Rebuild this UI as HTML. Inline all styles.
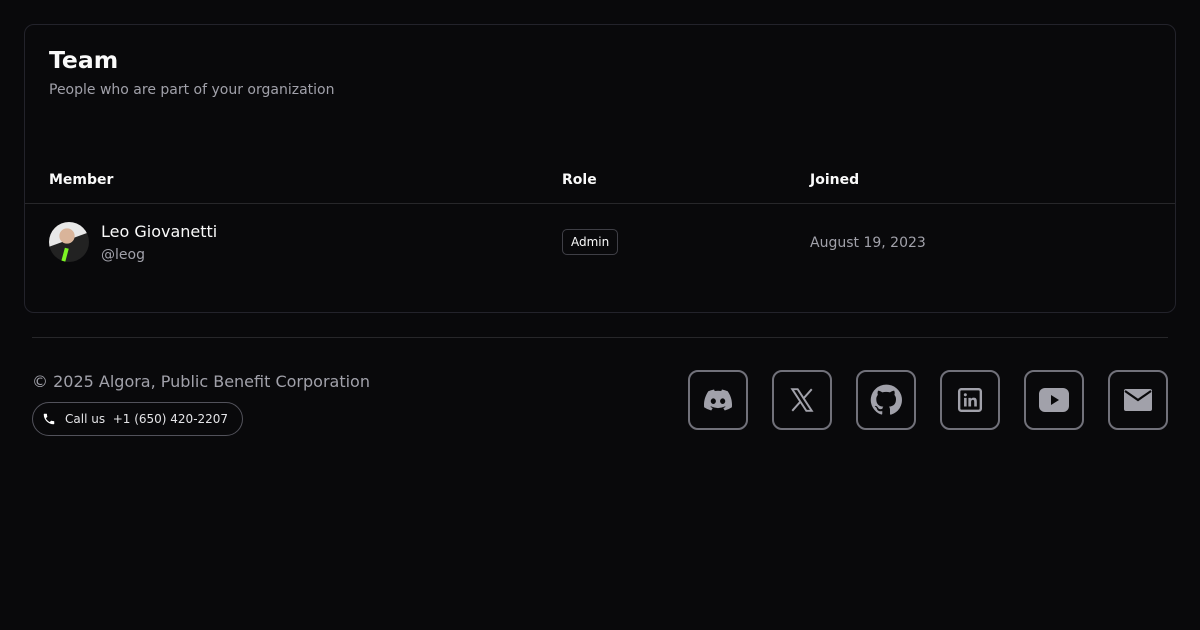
<!DOCTYPE html>
<html><head><style>
*{margin:0;padding:0;box-sizing:border-box}
body{width:1200px;height:630px;background:#09090b;font-family:"DejaVu Sans","Liberation Sans",sans-serif;color:#fafafa;position:relative;overflow:hidden}
.card{position:absolute;left:24px;top:24px;width:1152px;height:289px;border:1px solid #23232b;border-radius:10px}
.t{position:absolute;left:24px;top:21px;font-size:23.5px;font-weight:bold}
.s{position:absolute;left:24px;top:57px;font-size:14px;color:#a1a1aa}
.h{position:absolute;top:147px;font-size:14px;font-weight:bold}
.line{position:absolute;left:0;right:0;top:178px;border-top:1px solid #27272a}
.av{position:absolute;left:24px;top:197px;width:40px;height:40px;border-radius:50%;background:radial-gradient(circle at 45% 35%,#d9b49a 0 22%,transparent 23%),linear-gradient(160deg,#e8e8e8 0 45%,#222 46%);overflow:hidden}
.av:after{content:"";position:absolute;left:14px;top:26px;width:4px;height:14px;background:#7cf523;transform:rotate(15deg)}
.nm{position:absolute;left:76px;top:197px;font-size:16px}
.us{position:absolute;left:76px;top:222px;font-size:14px;color:#a1a1aa}
.badge{position:absolute;left:537px;top:204px;height:26px;padding:0 8px;border:1px solid #3f3f46;border-radius:5px;font-size:12px;line-height:24px}
.dt{position:absolute;left:785px;top:210px;font-size:14px;color:#a1a1aa}
.fl{position:absolute;left:32px;top:337px;width:1136px;border-top:1px solid #27272a}
.cp{position:absolute;left:32px;top:372px;font-size:16px;color:#a1a1aa}
.call{position:absolute;left:32px;top:402px;width:211px;height:34px;border:1px solid #52525b;border-radius:17px;font-size:12px;color:#e4e4e7;line-height:32px;padding-left:32px}
.call svg{position:absolute;left:9px;top:9px}
.ic{position:absolute;top:370px;width:60px;height:60px;border:2px solid #71717a;border-radius:10px;display:flex;align-items:center;justify-content:center}
</style></head><body>
<div class="card">
<div class="t">Team</div>
<div class="s">People who are part of your organization</div>
<div class="h" style="left:24px">Member</div>
<div class="h" style="left:537px">Role</div>
<div class="h" style="left:785px">Joined</div>
<div class="line"></div>
<div class="av"></div>
<div class="nm">Leo Giovanetti</div>
<div class="us">@leog</div>
<div class="badge">Admin</div>
<div class="dt">August 19, 2023</div>
</div>
<div class="fl"></div>
<div class="cp">© 2025 Algora, Public Benefit Corporation</div>
<div class="call"><svg width="14" height="14" viewBox="0 0 24 24"><path fill="#fff" d="M6.6 10.8a15 15 0 006.6 6.6l2.2-2.2c.3-.3.7-.4 1-.2 1.1.4 2.3.6 3.6.6.6 0 1 .4 1 1V20c0 .6-.4 1-1 1A17 17 0 013 4c0-.6.4-1 1-1h3.5c.6 0 1 .4 1 1 0 1.3.2 2.5.6 3.6.1.3 0 .7-.2 1z"/></svg>Call us&nbsp;&nbsp;+1 (650) 420-2207</div>
<div class="ic" style="left:688px"><svg width="28" height="22" viewBox="0 0 24 18"><path fill="#a1a1aa" d="M20.3 1.5A19.8 19.8 0 0015.4 0l-.6 1.3a18 18 0 00-5.6 0L8.6 0a19.7 19.7 0 00-4.9 1.5C.6 6.2-.3 10.7.1 15.2A20 20 0 006.2 18l1.3-2.1c-.7-.3-1.4-.6-2-1l.5-.4a14 14 0 0012 0l.5.4c-.6.4-1.3.7-2 1l1.3 2.1a20 20 0 006.1-2.8c.5-5.2-.8-9.7-3.6-13.7zM8 12.4c-1.2 0-2.2-1.1-2.2-2.4S6.8 7.6 8 7.6s2.2 1.1 2.2 2.4-1 2.4-2.2 2.4zm8 0c-1.2 0-2.2-1.1-2.2-2.4s1-2.4 2.2-2.4 2.2 1.1 2.2 2.4-1 2.4-2.2 2.4z"/></svg></div>
<div class="ic" style="left:772px"><svg width="26" height="26" viewBox="0 0 24 24" fill="none" stroke="#a1a1aa" stroke-width="1.8"><path d="M3 2h5l13 20h-5zM21 2l-8 9M3 22l8-9"/></svg></div>
<div class="ic" style="left:856px"><svg width="32" height="32" viewBox="0 0 24 24"><path fill="#a1a1aa" d="M12 .5a11.5 11.5 0 00-3.6 22.4c.6.1.8-.3.8-.6v-2c-3.2.7-3.900-1.5-3.9-1.5-.5-1.3-1.3-1.7-1.3-1.7-1-.7.1-.7.1-.7 1.2.1 1.8 1.2 1.8 1.2 1 1.8 2.7 1.3 3.4 1 .1-.8.4-1.300.7-1.6-2.6-.3-5.3-1.3-5.3-5.7 0-1.3.5-2.3 1.2-3.1-.1-.3-.5-1.5.1-3.1 0 0 1-.3 3.2 1.2a11 11 0 015.8 0C17.2 4.8 18.2 5.1 18.2 5.1c.6 1.6.2 2.8.1 3.1.7.8 1.2 1.8 1.2 3.1 0 4.4-2.7 5.4-5.3 5.7.4.4.8 1.1.8 2.2v3.2c0 .3.2.7.8.6A11.5 11.5 0 0012 .5z"/></svg></div>
<div class="ic" style="left:940px"><svg width="26" height="26" viewBox="0 0 24 24"><rect x="2" y="2" width="20" height="20" rx="2" fill="none" stroke="#a1a1aa" stroke-width="2.2"/><path fill="#a1a1aa" d="M6.5 10h2.4v8H6.5zM7.7 5.8a1.4 1.4 0 110 2.8 1.4 1.4 0 010-2.8zM10.5 10h2.3v1.1c.4-.7 1.3-1.3 2.6-1.3 2.4 0 2.9 1.6 2.9 3.6V18h-2.4v-4c0-1-.1-2.1-1.3-2.1s-1.6 1-1.6 2V18h-2.5z"/></svg></div>
<div class="ic" style="left:1024px"><svg width="30" height="24" viewBox="0 0 30 24"><rect x="0" y="0" width="30" height="24" rx="6" fill="#a1a1aa"/><path fill="#09090b" d="M12 7l8 5-8 5z"/></svg></div>
<div class="ic" style="left:1108px"><svg width="28" height="22" viewBox="0 0 28 22"><rect width="28" height="22" rx="2" fill="#a1a1aa"/><path d="M1 2l13 9 13-9" fill="none" stroke="#09090b" stroke-width="2.2"/></svg></div>
</body></html>
